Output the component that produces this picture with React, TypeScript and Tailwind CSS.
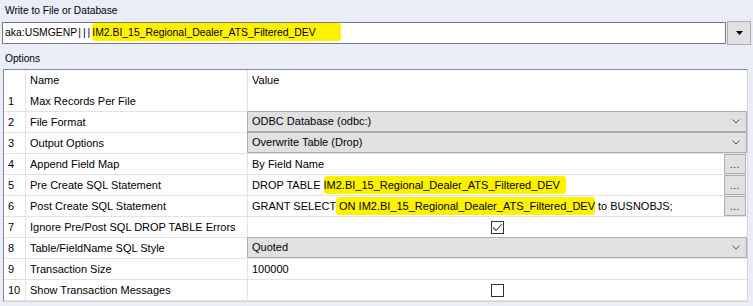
import React from 'react';

type Row = {
  n: number;
  name: string;
  kind: 'text' | 'combo' | 'button' | 'check';
  value?: React.ReactNode;
  checked?: boolean;
};

const Hl = ({ children, className = '' }: { children: React.ReactNode; className?: string }) => (
  <span className={`bg-[#fff200] rounded-[3px] py-[3px] ${className}`}>{children}</span>
);

const rows: Row[] = [
  { n: 1, name: 'Max Records Per File', kind: 'text', value: '' },
  { n: 2, name: 'File Format', kind: 'combo', value: 'ODBC Database (odbc:)' },
  { n: 3, name: 'Output Options', kind: 'combo', value: 'Overwrite Table (Drop)' },
  { n: 4, name: 'Append Field Map', kind: 'button', value: 'By Field Name' },
  {
    n: 5,
    name: 'Pre Create SQL Statement',
    kind: 'button',
    value: (
      <>
        DROP TABLE <Hl className="pr-[6px]">IM2.BI_15_Regional_Dealer_ATS_Filtered_DEV</Hl>
      </>
    ),
  },
  {
    n: 6,
    name: 'Post Create SQL Statement',
    kind: 'button',
    value: (
      <>
        GRANT SELECT <Hl className="pl-[3px] -ml-[3px]">ON IM2.BI_15_Regional_Dealer_ATS_Filtered_DEV</Hl> to BUSNOBJS;
      </>
    ),
  },
  { n: 7, name: 'Ignore Pre/Post SQL DROP TABLE Errors', kind: 'check', checked: true },
  { n: 8, name: 'Table/FieldName SQL Style', kind: 'combo', value: 'Quoted' },
  { n: 9, name: 'Transaction Size', kind: 'text', value: '100000' },
  { n: 10, name: 'Show Transaction Messages', kind: 'check', checked: false },
];

function Chevron() {
  return (
    <svg width="8" height="5" viewBox="0 0 8 5" className="shrink-0">
      <path d="M0.5 0.5 L4 4 L7.5 0.5" fill="none" stroke="#555" strokeWidth="1" />
    </svg>
  );
}

function ValueCell({ row }: { row: Row }) {
  if (row.kind === 'combo') {
    return (
      <div className="-my-px -ml-px h-[21px] flex items-center justify-between bg-[#e1e1e1] border border-[#adadad] pl-[4px] pr-[6px]">
        <span>{row.value}</span>
        <Chevron />
      </div>
    );
  }
  if (row.kind === 'check') {
    return (
      <div className="h-full flex items-center justify-center">
        <div className="w-[13px] h-[13px] border border-[#333] bg-white flex items-center justify-center">
          {row.checked && (
            <svg width="11" height="9" viewBox="0 0 11 9">
              <path d="M1 4.5 L4 7.5 L10 1" fill="none" stroke="#444" strokeWidth="1.1" />
            </svg>
          )}
        </div>
      </div>
    );
  }
  if (row.kind === 'button') {
    return (
      <div className="h-full flex items-center justify-between pl-[4px]">
        <span className="whitespace-nowrap">{row.value}</span>
        <div className="w-[22px] h-[20px] mr-px bg-[#e1e1e1] border border-[#adadad] flex items-end justify-center pb-[3px] text-[#1b1464] text-[10px] leading-none tracking-[0.5px]">
          ...
        </div>
      </div>
    );
  }
  return <div className="h-full flex items-center pl-[4px]">{row.value}</div>;
}

export default function App() {
  return (
    <div className="w-[753px] h-[306px] bg-[#eaeef9] text-black text-[11px] font-['Liberation_Sans',Arial,sans-serif] overflow-hidden">
      <div className="h-[21px] leading-[21px] pl-[5px] text-[10.2px]">Write to File or Database</div>

      <div className="h-[24px] flex items-center pl-[2px] pr-[2px] gap-px text-[10.4px]">
        <div className="h-[22px] flex-1 bg-white border border-[#7a7a7a] flex items-center pl-[2px]">
          <span className="whitespace-nowrap">
            aka:USMGENP<span className="tracking-[2px] pl-[1px]">|||</span>
            <Hl className="pr-[25px] pt-[4px]">IM2.BI_15_Regional_Dealer_ATS_Filtered_DEV</Hl>
          </span>
        </div>
        <div className="w-[24px] h-[24px] bg-[#e1e1e1] border border-[#adadad] flex items-center justify-center">
          <svg width="7" height="4" viewBox="0 0 7 4">
            <path d="M0 0 H7 L3.5 4 Z" fill="#000" />
          </svg>
        </div>
      </div>

      <div className="h-[24px] pt-[4px] leading-[20px] pl-[5px] text-[10.2px]">Options</div>

      <div className="ml-[3px] w-[745px] bg-white border-t border-l border-[#828790] border-r border-r-[#d5d5d5] border-b border-b-[#d5d5d5]">
        <div className="grid grid-cols-[22px_222px_499px] h-[21px]">
          <div className="border-r border-[#e3e3e3]" />
          <div className="border-r border-[#e3e3e3] flex items-center pl-[4px]">Name</div>
          <div className="flex items-center pl-[4px]">Value</div>
        </div>
        {rows.map((row) => (
          <div key={row.n} className="grid grid-cols-[22px_222px_499px] h-[21px] border-b border-[#e3e3e3]">
            <div className="border-r border-[#e3e3e3] flex items-center pl-[4px]">{row.n}</div>
            <div className="border-r border-[#e3e3e3] flex items-center pl-[4px] whitespace-nowrap">{row.name}</div>
            <ValueCell row={row} />
          </div>
        ))}
      </div>
    </div>
  );
}
